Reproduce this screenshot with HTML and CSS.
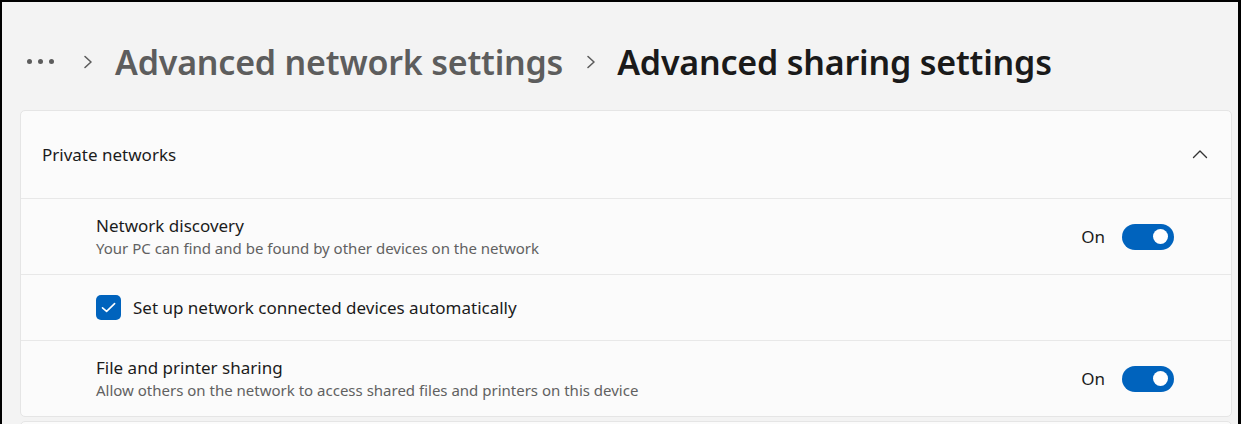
FILE: index.html
```html
<!DOCTYPE html>
<html lang="en">
<head>
<meta charset="utf-8">
<title>Advanced sharing settings</title>
<link rel="stylesheet" href="styles.css">
</head>
<body>
<div class="page">
  <div class="breadcrumb">
    <div class="dots"><span></span><span></span><span></span></div>
    <svg class="crumb-chev" width="10" height="14" viewBox="0 0 10 14"><path d="M2 1.5 L8 7 L2 12.5" fill="none" stroke="#5c5c5c" stroke-width="1.6" stroke-linecap="round" stroke-linejoin="round"/></svg>
    <span class="crumb prev">Advanced network settings</span>
    <svg class="crumb-chev" width="10" height="14" viewBox="0 0 10 14"><path d="M2 1.5 L8 7 L2 12.5" fill="none" stroke="#5c5c5c" stroke-width="1.6" stroke-linecap="round" stroke-linejoin="round"/></svg>
    <span class="crumb current">Advanced sharing settings</span>
  </div>

  <div class="card">
    <div class="card-header">
      <span class="header-title">Private networks</span>
      <svg class="chev-up" width="16" height="10" viewBox="0 0 16 10"><path d="M1.5 8.5 L8 2 L14.5 8.5" fill="none" stroke="#333" stroke-width="1.4" stroke-linecap="round" stroke-linejoin="round"/></svg>
    </div>
    <div class="row tall">
      <div class="row-text">
        <div class="row-title">Network discovery</div>
        <div class="row-sub">Your PC can find and be found by other devices on the network</div>
      </div>
      <div class="toggle-wrap">
        <span class="toggle-label">On</span>
        <span class="toggle"><span class="knob"></span></span>
      </div>
    </div>
    <div class="row short">
      <span class="checkbox">
        <svg width="25" height="25" viewBox="0 0 25 25"><path d="M6.5 12.8 L10.6 16.4 L18.6 8.6" fill="none" stroke="#fff" stroke-width="1.6" stroke-linecap="round" stroke-linejoin="round"/></svg>
      </span>
      <span class="check-label">Set up network connected devices automatically</span>
    </div>
    <div class="row tall last">
      <div class="row-text">
        <div class="row-title">File and printer sharing</div>
        <div class="row-sub">Allow others on the network to access shared files and printers on this device</div>
      </div>
      <div class="toggle-wrap">
        <span class="toggle-label">On</span>
        <span class="toggle"><span class="knob"></span></span>
      </div>
    </div>
  </div>
  <div class="card next"></div>
</div>
</body>
</html>
```

FILE: styles.css
```css
* { box-sizing: border-box; }
html, body { margin: 0; padding: 0; }
body {
  font-family: "Noto Sans", "Open Sans", sans-serif;
  color: #1b1b1b;
  background: #000;
}
.page {
  width: 1241px;
  height: 424px;
  overflow: hidden;
  background: #f3f3f3;
  border-top: 2px solid #000;
  border-left: 2px solid #000;
  border-right: 3px solid #000;
}
.breadcrumb {
  display: flex;
  align-items: center;
  height: 80px;
  margin-top: 20px;
  margin-bottom: 8px;
  padding-left: 25px;
}
.dots {
  display: flex;
  gap: 6px;
  margin-right: 29px;
  margin-top: -2px;
}
.dots span {
  width: 5px;
  height: 5px;
  border-radius: 50%;
  background: #5c5c5c;
}
.crumb-chev { flex: none; }
.crumb {
  font-size: 34px;
  font-weight: 600;
  letter-spacing: -0.2px;
  white-space: nowrap;
}
.crumb.prev { color: #5d5d5d; margin: 0 23px 0 22px; }
.crumb.current { color: #1a1a1a; margin-left: 21px; }

.card {
  margin-left: 18px;
  width: 1212px;
  background: #fbfbfb;
  border: 1px solid #e5e5e5;
  border-radius: 5px;
}
.card.next { margin-top: 4px; height: 40px; }
.card-header {
  height: 88px;
  border-bottom: 1px solid #e8e8e8;
  display: flex;
  align-items: center;
  justify-content: space-between;
  padding: 0 23px 0 21px;
}
.header-title { font-size: 17px; }
.chev-up { margin-top: -2px; }

.row {
  display: flex;
  align-items: center;
  padding: 0 57px 0 75px;
  border-bottom: 1px solid #e8e8e8;
}
.row.tall { height: 76px; justify-content: space-between; }
.row.short { height: 66px; }
.row.last { border-bottom: none; height: 75px; }
.row-text { display: flex; flex-direction: column; }
.row-title { font-size: 17px; line-height: 22px; }
.row-sub { font-size: 15px; line-height: 22px; color: #616161; }
.toggle-wrap { display: flex; align-items: center; }
.toggle-label { font-size: 17px; margin-right: 17px; }
.toggle {
  width: 52px;
  height: 26px;
  border-radius: 13px;
  background: #0063bd;
  display: flex;
  align-items: center;
  justify-content: flex-end;
  padding-right: 6px;
}
.knob {
  width: 15px;
  height: 15px;
  border-radius: 50%;
  background: #fff;
}
.checkbox {
  width: 25px;
  height: 25px;
  border-radius: 5px;
  background: #0063bd;
  display: flex;
  margin-right: 12px;
}
.check-label { font-size: 17px; }
```
